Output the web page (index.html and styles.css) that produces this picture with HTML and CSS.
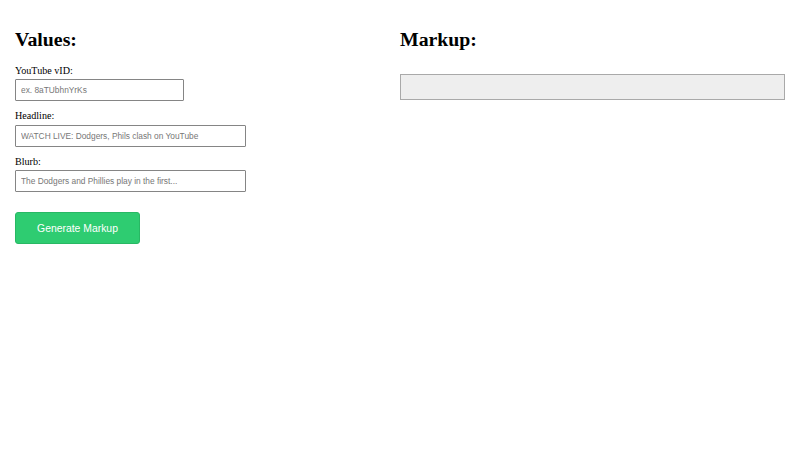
FILE: index.html
```html
<!DOCTYPE html>
<html>
<head>
<meta charset="utf-8">
<title>Markup Generator</title>
<link rel="stylesheet" href="styles.css">
</head>
<body>
<div class="container">
  <section class="col">
    <h2 class="title">Values:</h2>
    <label class="field-label" for="vid">YouTube vID:</label>
    <input class="field field-short" id="vid" type="text" placeholder="ex. 8aTUbhnYrKs">
    <label class="field-label" for="headline">Headline:</label>
    <input class="field field-long" id="headline" type="text" placeholder="WATCH LIVE: Dodgers, Phils clash on YouTube">
    <label class="field-label" for="blurb">Blurb:</label>
    <input class="field field-long" id="blurb" type="text" placeholder="The Dodgers and Phillies play in the first...">
    <button class="btn" type="button">Generate Markup</button>
  </section>
  <section class="col">
    <h2 class="title">Markup:</h2>
    <textarea class="output" readonly></textarea>
  </section>
</div>
</body>
</html>
```
FILE: styles.css
```css
html, body {
  margin: 0;
  padding: 0;
  background: #fff;
}
body {
  font-family: "Liberation Serif", "Times New Roman", serif;
  color: #000;
}
.container {
  display: grid;
  grid-template-columns: 385px 385px;
  padding: 12.4px 15px 0 15px;
}
.col {
  display: flex;
  flex-direction: column;
  align-items: flex-start;
}
.title {
  font-size: 19.8px;
  font-weight: bold;
  line-height: 22px;
  margin: 16px 0 14.4px 0;
}
.field-label {
  display: block;
  font-size: 10.1px;
  line-height: 11.5px;
  margin: 0 0 3px 0;
}
.field {
  box-sizing: border-box;
  height: 22px;
  margin: 0 0 9px 0;
  padding: 0 5px;
  border: 1px solid #858585;
  border-radius: 1px;
  font-family: "Liberation Sans", Arial, sans-serif;
  font-size: 8.35px;
  color: #000;
  background: #fff;
  outline: none;
}
.field::placeholder {
  color: #777;
}
.field-short { width: 169px; }
.field-long { width: 231px; }
.btn {
  box-sizing: border-box;
  margin-top: 11px;
  width: 125px;
  height: 32px;
  background: #2ecc71;
  border: 1px solid #28b864;
  border-radius: 3px;
  color: #fff;
  font-family: "Liberation Sans", Arial, sans-serif;
  font-size: 10.4px;
  padding: 0;
}
.output {
  box-sizing: border-box;
  display: block;
  width: 385px;
  height: 26px;
  margin: 9.6px 0 0 0;
  padding: 2px;
  background: #eeeeee;
  border: 1px solid #a9a9a9;
  resize: none;
}
```
